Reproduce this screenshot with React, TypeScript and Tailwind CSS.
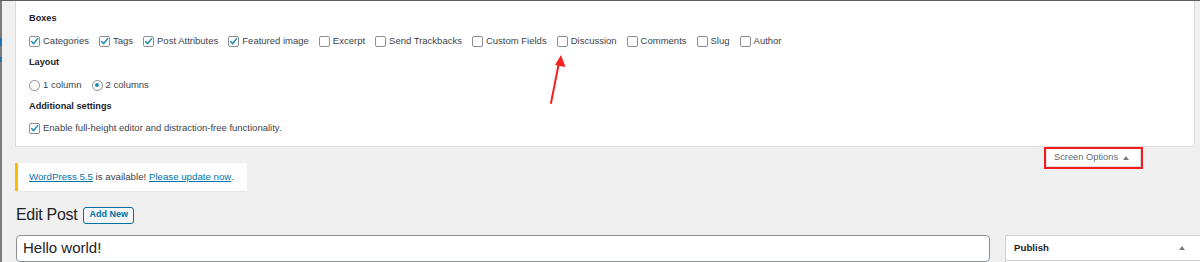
import React from "react";

const boxes: [string, boolean][] = [
  ["Categories", true],
  ["Tags", true],
  ["Post Attributes", true],
  ["Featured image", true],
  ["Excerpt", false],
  ["Send Trackbacks", false],
  ["Custom Fields", false],
  ["Discussion", false],
  ["Comments", false],
  ["Slug", false],
  ["Author", false],
];

function Check({ checked }: { checked: boolean }) {
  return (
    <span className="relative inline-flex h-[11px] w-[11px] shrink-0 items-center justify-center rounded-[2px] border border-[#8c8f94] bg-white">
      {checked && (
        <svg width="11" height="11" viewBox="0 0 11 11" className="absolute left-[-1px] top-[-1px]">
          <path d="M2.6 5.6 L4.6 7.8 L8.6 2.6" fill="none" stroke="#1e8cbe" strokeWidth="1.5" strokeLinecap="round" strokeLinejoin="round" />
        </svg>
      )}
    </span>
  );
}

function Radio({ checked }: { checked: boolean }) {
  return (
    <span className="inline-flex h-[11px] w-[11px] shrink-0 items-center justify-center rounded-full border border-[#8c8f94] bg-white">
      {checked && <span className="h-[4px] w-[4px] rounded-full bg-[#1e8cbe]" />}
    </span>
  );
}

function Item({ label, checked, radio }: { label: string; checked: boolean; radio?: boolean }) {
  return (
    <span className="flex items-center gap-[3px]">
      {radio ? <Radio checked={checked} /> : <Check checked={checked} />}
      <span>{label}</span>
    </span>
  );
}

export default function App() {
  return (
    <div className="relative flex h-[262px] w-[1200px] overflow-hidden border-t border-[#5d5d5d] bg-[#f0f0f1] font-['Liberation_Sans',Arial,sans-serif] text-[9.5px] text-[#3c434a]">
      {/* left frame edge */}
      <div className="relative w-[2px] shrink-0 bg-[#7a7a7a]">
        <div className="absolute left-0 top-[37px] h-[8px] w-[2px] bg-[#2271b1]" />
        <div className="absolute left-0 top-[56px] h-[5px] w-[2px] bg-[#2271b1]" />
      </div>

      <div className="flex flex-1 flex-col pl-[13px]">
        {/* screen options panel */}
        <div className="relative w-[1180px] shrink-0">
          <div className="flex flex-col border-x border-b border-[#dcdcde] bg-white pb-[8px] pl-[13px] pt-[7px]">
            <div className="flex h-[22px] items-center text-[9.2px] font-bold text-[#1d2327]">Boxes</div>
            <div className="flex h-[22px] items-center gap-[10px]">
              {boxes.map(([l, c]) => (
                <Item key={l} label={l} checked={c} />
              ))}
            </div>
            <div className="flex h-[22px] items-center text-[9.2px] font-bold text-[#1d2327]">Layout</div>
            <div className="flex h-[22px] items-center gap-[10px]">
              <Item label="1 column" checked={false} radio />
              <Item label="2 columns" checked={true} radio />
            </div>
            <div className="flex h-[22px] items-center text-[9.2px] font-bold text-[#1d2327]">Additional settings</div>
            <div className="flex h-[20px] items-center">
              <Item label="Enable full-height editor and distraction-free functionality." checked={true} />
            </div>
          </div>

          {/* Screen Options tab */}
          <div className="absolute left-[1029px] top-full z-10 h-[22px] w-[99px] border-2 border-[#f41c1c]">
            <div className="flex h-[18px] items-center justify-center gap-[5px] border-x border-b border-[#dcdcde] bg-white pr-[4px] text-[9.3px] text-[#646970]">
              <span>Screen Options</span>
              <svg width="6" height="4" viewBox="0 0 6 4">
                <path d="M0 4 L3 0 L6 4 Z" fill="#787c82" />
              </svg>
            </div>
          </div>
        </div>

        {/* update notice */}
        <div className="mt-[16px] flex h-[28px] w-[232px] shrink-0 items-center border-l-[3px] border-[#ffb900] bg-white pl-[11px] text-[9.7px] shadow-[0_1px_1px_rgba(0,0,0,0.04)]">
          <a className="text-[#0073aa] underline">WordPress 5.5</a>
          <span>&nbsp;is available!&nbsp;</span>
          <a className="text-[#0073aa] underline">Please update now</a>
          <span>.</span>
        </div>

        {/* heading */}
        <div className="mt-[15px] flex h-[18px] shrink-0 items-center pl-[1px]">
          <h1 className="text-[16px] font-normal tracking-[-0.3px] text-[#1d2327]">Edit Post</h1>
          <span className="ml-[6px] flex h-[17px] w-[51px] items-center justify-center rounded-[3px] border border-[#0071a1] bg-[#f3f5f6] text-[9px] font-bold text-[#0071a1]">
            Add New
          </span>
        </div>

        {/* title + publish */}
        <div className="mt-[11px] flex shrink-0 items-start pl-[1px]">
          <div className="flex h-[27px] w-[974px] items-center rounded-[4px] border border-[#8c8f94] bg-white pl-[6px] text-[15px] text-[#1d2327]">
            Hello world!
          </div>
          <div className="ml-[15px] w-[210px] shrink-0 border border-[#ccd0d4] bg-white">
            <div className="flex h-[25px] items-center justify-between border-b border-[#ccd0d4] pl-[8px] pr-[29px] text-[9.7px] font-bold text-[#1d2327]">
              <span>Publish</span>
              <svg width="6" height="4" viewBox="0 0 6 4">
                <path d="M0 4 L3 0 L6 4 Z" fill="#787c82" />
              </svg>
            </div>
            <div className="h-[20px]" />
          </div>
        </div>
      </div>

      {/* red arrow annotation */}
      <svg className="pointer-events-none absolute left-0 top-0" width="1200" height="262" viewBox="0 0 1200 262">
        <line x1="551" y1="102" x2="558.5" y2="64" stroke="#f52020" strokeWidth="2" strokeLinecap="round" />
        <path d="M561 54 L565.5 66 L555 64 Z" fill="#f52020" />
      </svg>
    </div>
  );
}
